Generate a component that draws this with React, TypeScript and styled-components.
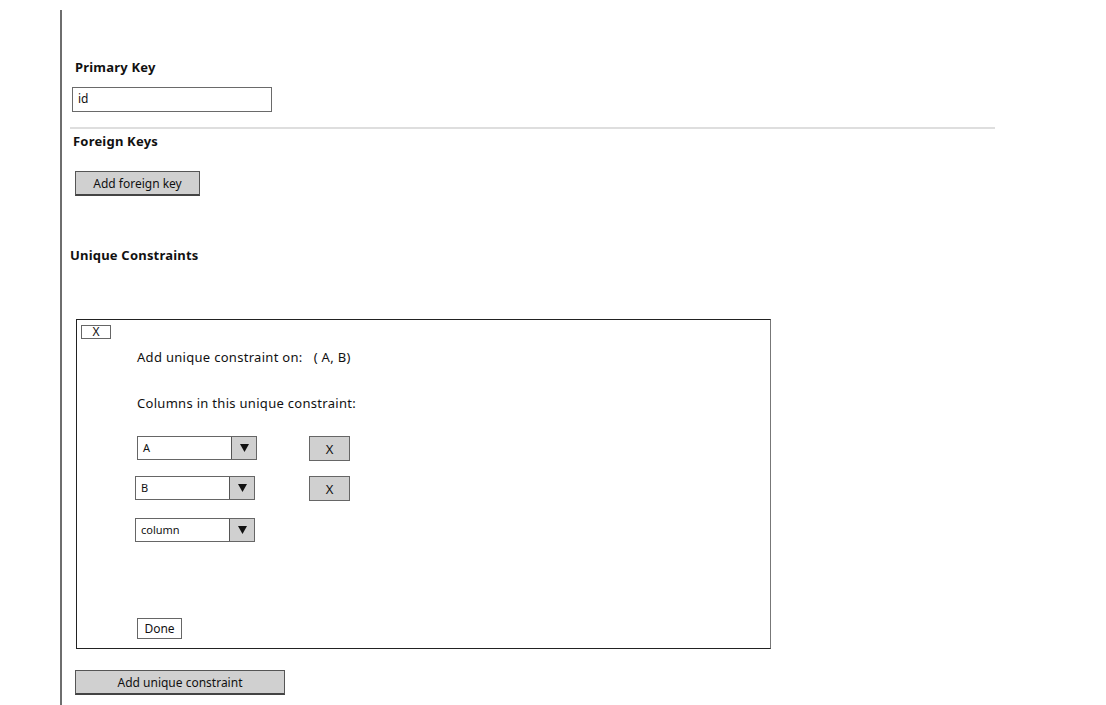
import React from "react";
import styled, { createGlobalStyle } from "styled-components";

const GlobalStyle = createGlobalStyle`
  html, body {
    margin: 0;
    padding: 0;
    background: #fff;
  }
  body {
    font-family: "Noto Sans", "DejaVu Sans", sans-serif;
    color: #111;
  }
`;

const App = () => {
  return (
    <>
      <GlobalStyle />
      <Page>
        <Heading $top={48} $left={13}>Primary Key</Heading>
        <TextInput $top={11} $left={10}>id</TextInput>
        <Divider />
        <Heading $top={3} $left={11}>Foreign Keys</Heading>
        <GrayButton $top={21} $left={13} $width={125}>
          Add foreign key
        </GrayButton>
        <Heading $top={50} $left={8}>Unique Constraints</Heading>

        <Dialog>
          <CloseButton>X</CloseButton>
          <DialogText $top={9}>Add unique constraint on:&nbsp;&nbsp;&nbsp;( A, B)</DialogText>
          <DialogText $top={28}>Columns in this unique constraint:</DialogText>

          <ColumnRow $top={24} $left={60}>
            <Select value="A" />
            <RemoveButton>X</RemoveButton>
          </ColumnRow>
          <ColumnRow $top={15} $left={58}>
            <Select value="B" />
            <RemoveButton $shift={2}>X</RemoveButton>
          </ColumnRow>
          <ColumnRow $top={17} $left={58}>
            <Select value="column" />
          </ColumnRow>

          <DoneButton>Done</DoneButton>
        </Dialog>

        <GrayButton $top={21} $left={13} $width={210}>
          Add unique constraint
        </GrayButton>
      </Page>
    </>
  );
};

const Select = ({ value }: { value: string }) => (
  <SelectBox>
    <SelectValue>{value}</SelectValue>
    <SelectArrow>
      <svg width="9" height="8" viewBox="0 0 9 8">
        <path d="M0 0 H9 L4.5 8 Z" fill="#111" />
      </svg>
    </SelectArrow>
  </SelectBox>
);

export default App;

const Page = styled.div`
  margin-left: 60px;
  margin-top: 10px;
  border-left: 2px solid #6e6e6e;
  height: 695px;
  display: flex;
  flex-direction: column;
  align-items: flex-start;
  box-sizing: border-box;
`;

const Heading = styled.h4<{ $top: number; $left: number }>`
  margin: ${(p) => p.$top}px 0 0 ${(p) => p.$left}px;
  font-size: 13px;
  font-weight: 700;
  line-height: 18px;
  letter-spacing: 0.2px;
  color: #111;
`;

const TextInput = styled.div<{ $top: number; $left: number }>`
  margin: ${(p) => p.$top}px 0 0 ${(p) => p.$left}px;
  width: 200px;
  height: 25px;
  box-sizing: border-box;
  border: 1.5px solid #6a6a6a;
  padding: 0 5px;
  font-size: 12px;
  line-height: 22px;
  background: #fff;
`;

const Divider = styled.div`
  margin: 15px 0 0 8px;
  width: 925px;
  height: 2px;
  background: #dedede;
`;

const GrayButton = styled.div<{ $top: number; $left: number; $width: number }>`
  margin: ${(p) => p.$top}px 0 0 ${(p) => p.$left}px;
  width: ${(p) => p.$width}px;
  height: 25px;
  box-sizing: border-box;
  border: 1px solid #555;
  border-bottom: 2px solid #444;
  background: #d0d0d0;
  display: flex;
  align-items: center;
  justify-content: center;
  font-size: 12px;
  color: #111;
`;

const Dialog = styled.div`
  margin: 55px 0 0 14px;
  width: 695px;
  height: 330px;
  box-sizing: border-box;
  border: 1px solid #222;
  border-right-color: #777;
  display: flex;
  flex-direction: column;
  align-items: flex-start;
`;

const CloseButton = styled.div`
  margin: 5px 0 0 4px;
  width: 30px;
  height: 14px;
  box-sizing: border-box;
  border: 1.5px solid #666;
  display: flex;
  align-items: center;
  justify-content: center;
  font-size: 12px;
  line-height: 12px;
`;

const DialogText = styled.div<{ $top: number }>`
  margin: ${(p) => p.$top}px 0 0 60px;
  font-size: 13px;
  line-height: 18px;
  letter-spacing: 0.3px;
  color: #111;
`;

const ColumnRow = styled.div<{ $top: number; $left: number }>`
  margin: ${(p) => p.$top}px 0 0 ${(p) => p.$left}px;
  display: flex;
  align-items: flex-start;
  height: 25px;
`;

const SelectBox = styled.div`
  width: 120px;
  height: 24px;
  box-sizing: border-box;
  border: 1.5px solid #666;
  display: flex;
  background: #fff;
`;

const SelectValue = styled.div`
  flex: 1;
  padding-left: 5px;
  font-size: 11px;
  line-height: 21px;
`;

const SelectArrow = styled.div`
  width: 24px;
  border-left: 1.5px solid #555;
  background: #d0d0d0;
  display: flex;
  align-items: center;
  justify-content: center;
`;

const RemoveButton = styled.div<{ $shift?: number }>`
  margin-left: ${(p) => 52 + (p.$shift ?? 0)}px;
  width: 41px;
  height: 25px;
  box-sizing: border-box;
  border: 1.5px solid #666;
  background: #d0d0d0;
  display: flex;
  align-items: center;
  justify-content: center;
  font-size: 13px;
`;

const DoneButton = styled.div`
  margin: auto 0 9px 60px;
  width: 45px;
  height: 21px;
  box-sizing: border-box;
  border: 1.5px solid #666;
  display: flex;
  align-items: center;
  justify-content: center;
  font-size: 12px;
`;
